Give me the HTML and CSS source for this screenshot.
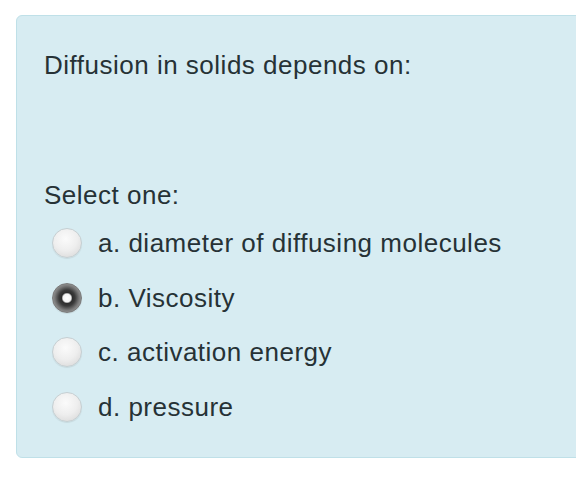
FILE: index.html
```html
<!DOCTYPE html>
<html>
<head>
<meta charset="utf-8">
<link rel="stylesheet" href="styles.css">
</head>
<body>
<div class="card">
  <div class="question">Diffusion in solids depends on:</div>
  <div class="prompt">Select one:</div>
  <div class="answers">
    <div class="option"><span class="radio"></span><span class="label">a. diameter of diffusing molecules</span></div>
    <div class="option"><span class="radio checked"></span><span class="label">b. Viscosity</span></div>
    <div class="option"><span class="radio"></span><span class="label">c. activation energy</span></div>
    <div class="option"><span class="radio"></span><span class="label">d. pressure</span></div>
  </div>
</div>
</body>
</html>
```
FILE: styles.css
```css
html, body {
  margin: 0;
  padding: 0;
  background: #ffffff;
}
body {
  padding: 15px 0 0 16px;
  overflow: hidden;
  font-family: "Liberation Sans", Arial, sans-serif;
  color: #263236;
}
.card {
  box-sizing: border-box;
  width: 580px;
  height: 443px;
  background: #d7ecf2;
  border: 1px solid #bfe0e8;
  border-radius: 6px;
  padding: 34px 0 0 27px;
}
.question,
.prompt,
.label {
  font-size: 26px;
  line-height: 30px;
  letter-spacing: 0.5px;
}
.prompt {
  margin-top: 100px;
}
.answers {
  display: flex;
  flex-direction: column;
  gap: 24.5px;
  margin-top: 18px;
  padding-left: 8px;
}
.option {
  display: flex;
  align-items: center;
  gap: 16px;
  height: 30px;
}
.radio {
  box-sizing: border-box;
  width: 30px;
  height: 30px;
  border-radius: 50%;
  background: radial-gradient(circle at 45% 35%, #fbfbfb 0%, #eeeeee 50%, #d4d4d4 100%);
  border: 1px solid #c6cfd2;
  box-shadow: 0 1px 1px rgba(0,0,0,0.08);
  flex: none;
}
.radio.checked {
  background: radial-gradient(circle at 50% 50%, #ffffff 0, #f4f4f4 4px, #2e2e2e 5.5px, #3a3a3a 8px, #777777 12px, #9a9a9a 15px);
  border: 1px solid #7a7a7a;
}
```
